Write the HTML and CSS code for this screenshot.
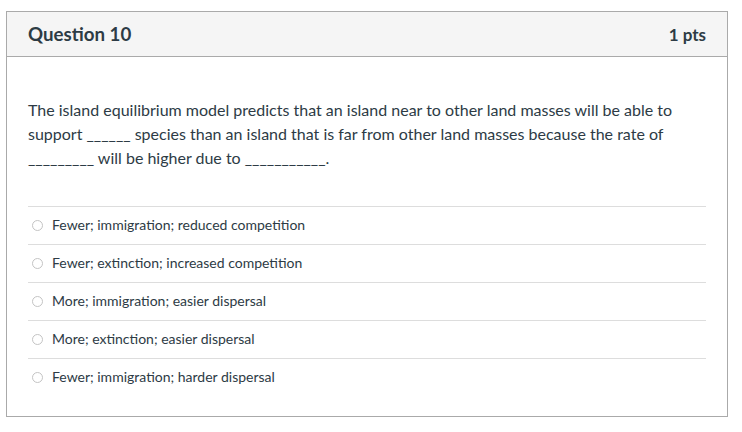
FILE: index.html
```html
<!DOCTYPE html>
<html>
<head>
<meta charset="utf-8">
<link rel="stylesheet" href="styles.css">
</head>
<body>
<div class="question">
  <div class="header">
    <div class="title">Question 10</div>
    <div class="points">1 pts</div>
  </div>
  <div class="content">
    <div class="text">The island equilibrium model predicts that an island near to other land masses will be able to support ______ species than an island that is far from other land masses because the rate of _________ will be higher due to ___________.</div>
    <div class="answers">
      <div class="answer"><span class="radio"></span><span class="label">Fewer; immigration; reduced competition</span></div>
      <div class="answer"><span class="radio"></span><span class="label">Fewer; extinction; increased competition</span></div>
      <div class="answer"><span class="radio"></span><span class="label">More; immigration; easier dispersal</span></div>
      <div class="answer"><span class="radio"></span><span class="label">More; extinction; easier dispersal</span></div>
      <div class="answer"><span class="radio"></span><span class="label">Fewer; immigration; harder dispersal</span></div>
    </div>
  </div>
</div>
</body>
</html>
```
FILE: styles.css
```css
body {
  margin: 0;
  background: #fff;
  font-family: Lato, "Liberation Sans", sans-serif;
  color: #2d3b45;
}
.question {
  margin: 11px 0 0 6px;
  width: 722px;
  box-sizing: border-box;
  border: 1px solid #aaa;
}
.header {
  height: 44px;
  background: #f5f5f5;
  border-bottom: 1px solid #aaa;
  display: flex;
  align-items: center;
  justify-content: space-between;
  padding: 0 21px;
  font-weight: bold;
}
.title {
  font-size: 18.7px;
}
.points {
  font-size: 17px;
}
.content {
  padding: 41px 21px 20px;
}
.text {
  font-size: 16px;
  line-height: 24px;
}
.answers {
  margin-top: 36px;
}
.answer {
  box-sizing: border-box;
  height: 38px;
  padding-bottom: 3px;
  border-top: 1px solid #ddd;
  display: flex;
  align-items: center;
  font-size: 14px;
}
.radio {
  width: 9px;
  height: 9px;
  border: 1px solid #c4c4c4;
  border-radius: 50%;
  margin: 3px 9px 0 4px;
  flex: none;
}
```
